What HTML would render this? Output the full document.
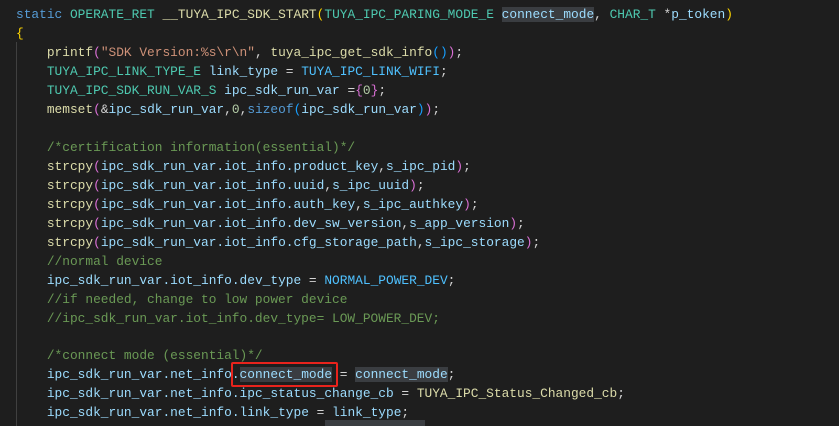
<!DOCTYPE html>
<html><head><meta charset="utf-8"><style>
html,body{margin:0;padding:0;background:#1e1e1e;width:839px;height:426px;overflow:hidden;}
.l{position:absolute;left:16px;height:19px;line-height:19px;white-space:pre;font-family:"Liberation Mono",monospace;font-size:12.85px;color:#d4d4d4;}
.k{color:#569cd6}.t{color:#4ec9b0}.f{color:#dcdcaa}.v{color:#9cdcfe}.s{color:#ce9178}.c{color:#6a9955}.n{color:#b5cea8}.m{color:#4fc1ff}
.b1{color:#ffd700}.b2{color:#da70d6}.b3{color:#179fff}
.sel{background:#3a3d41}
</style></head><body>
<div style="position:absolute;left:16px;top:42px;width:1px;height:384px;background:#404040"></div>
<div style="position:absolute;left:325px;top:420px;width:100px;height:6px;background:#3a3d41"></div>
<div class="l" style="top:5px"><span class="k">static</span> <span class="t">OPERATE_RET</span> <span class="f">__TUYA_IPC_SDK_START</span><span class="b1">(</span><span class="t">TUYA_IPC_PARING_MODE_E</span> <span class="v sel">connect_mode</span>, <span class="t">CHAR_T</span> *<span class="v">p_token</span><span class="b1">)</span></div>
<div class="l" style="top:24px"><span class="b1">{</span></div>
<div class="l" style="top:43px">    <span class="f">printf</span><span class="b2">(</span><span class="s">"SDK Version:%s\r\n"</span>, <span class="f">tuya_ipc_get_sdk_info</span><span class="b3">()</span><span class="b2">)</span>;</div>
<div class="l" style="top:62px">    <span class="t">TUYA_IPC_LINK_TYPE_E</span> <span class="v">link_type</span> = <span class="m">TUYA_IPC_LINK_WIFI</span>;</div>
<div class="l" style="top:81px">    <span class="t">TUYA_IPC_SDK_RUN_VAR_S</span> <span class="v">ipc_sdk_run_var</span> =<span class="b2">{</span><span class="n">0</span><span class="b2">}</span>;</div>
<div class="l" style="top:100px">    <span class="f">memset</span><span class="b2">(</span>&amp;<span class="v">ipc_sdk_run_var</span>,<span class="n">0</span>,<span class="k">sizeof</span><span class="b3">(</span><span class="v">ipc_sdk_run_var</span><span class="b3">)</span><span class="b2">)</span>;</div>
<div class="l c" style="top:138px">    /*certification information(essential)*/</div>
<div class="l" style="top:157px">    <span class="f">strcpy</span><span class="b2">(</span><span class="v">ipc_sdk_run_var.iot_info.product_key</span>,<span class="v">s_ipc_pid</span><span class="b2">)</span>;</div>
<div class="l" style="top:176px">    <span class="f">strcpy</span><span class="b2">(</span><span class="v">ipc_sdk_run_var.iot_info.uuid</span>,<span class="v">s_ipc_uuid</span><span class="b2">)</span>;</div>
<div class="l" style="top:195px">    <span class="f">strcpy</span><span class="b2">(</span><span class="v">ipc_sdk_run_var.iot_info.auth_key</span>,<span class="v">s_ipc_authkey</span><span class="b2">)</span>;</div>
<div class="l" style="top:214px">    <span class="f">strcpy</span><span class="b2">(</span><span class="v">ipc_sdk_run_var.iot_info.dev_sw_version</span>,<span class="v">s_app_version</span><span class="b2">)</span>;</div>
<div class="l" style="top:233px">    <span class="f">strcpy</span><span class="b2">(</span><span class="v">ipc_sdk_run_var.iot_info.cfg_storage_path</span>,<span class="v">s_ipc_storage</span><span class="b2">)</span>;</div>
<div class="l c" style="top:252px">    //normal device</div>
<div class="l" style="top:271px">    <span class="v">ipc_sdk_run_var.iot_info.dev_type</span> = <span class="m">NORMAL_POWER_DEV</span>;</div>
<div class="l c" style="top:290px">    //if needed, change to low power device</div>
<div class="l c" style="top:309px">    //ipc_sdk_run_var.iot_info.dev_type= LOW_POWER_DEV;</div>
<div class="l c" style="top:346px">    /*connect mode (essential)*/</div>
<div class="l" style="top:365px">    <span class="v">ipc_sdk_run_var.net_info.</span><span class="v sel">connect_mode</span> = <span class="v sel">connect_mode</span>;</div>
<div class="l" style="top:384px">    <span class="v">ipc_sdk_run_var.net_info.ipc_status_change_cb</span> = <span class="f">TUYA_IPC_Status_Changed_cb</span>;</div>
<div class="l" style="top:403px">    <span class="v">ipc_sdk_run_var.net_info.link_type</span> = <span class="v">link_type</span>;</div>
<div style="position:absolute;left:231px;top:362px;width:103px;height:21px;border:2px solid #e8231c;border-radius:2px"></div>
</body></html>
